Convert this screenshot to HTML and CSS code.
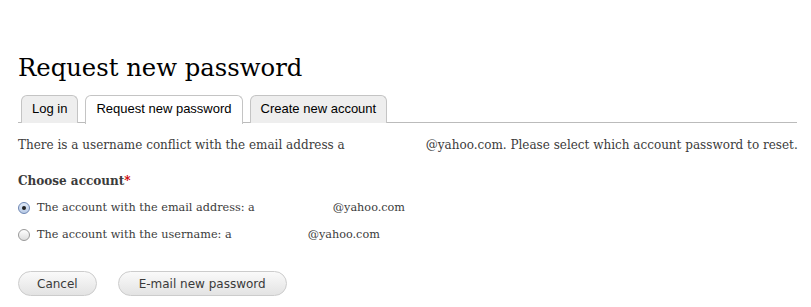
FILE: index.html
```html
<!DOCTYPE html>
<html>
<head>
<meta charset="utf-8">
<link rel="stylesheet" href="styles.css">
</head>
<body>
<div class="page">
  <h1 class="title">Request new password</h1>
  <ul class="tabs">
    <li class="tab">Log in</li>
    <li class="tab active">Request new password</li>
    <li class="tab">Create new account</li>
  </ul>
  <p class="msg">There is a username conflict with the email address a<span class="gap g1"></span>@yahoo.com. Please select which account password to reset.</p>
  <div class="field">
    <div class="label">Choose account<span class="req">*</span></div>
    <div class="opt"><span class="radio checked"></span><span>The account with the email address: a<span class="gap g2"></span>@yahoo.com</span></div>
    <div class="opt"><span class="radio"></span><span>The account with the username: a<span class="gap g3"></span>@yahoo.com</span></div>
  </div>
  <div class="actions">
    <button class="btn">Cancel</button>
    <button class="btn wide">E-mail new password</button>
  </div>
</div>
</body>
</html>
```
FILE: styles.css
```css
html, body { margin: 0; padding: 0; background: #fff; }
.page { padding: 50px 0 0 18px; font-family: "DejaVu Serif", serif; color: #3b3b3b; }
.title { margin: 0; font-family: "DejaVu Serif", serif; font-weight: normal; font-size: 24.3px; line-height: 36px; color: #000; }
.tabs { list-style: none; margin: 8px 14px 0 0; padding: 0 0 0 3px; display: flex; gap: 7px; border-bottom: 1px solid #bbb; height: 28px; }
.tab { font-family: "Liberation Sans", sans-serif; font-size: 13px; color: #000; background: #eee; border: 1px solid #c4c4c4; border-bottom: none; border-radius: 6px 6px 0 0; padding: 0 10px; height: 27px; line-height: 25px; margin-top: 1px; }
.tab.active { background: #fff; height: 28px; margin-bottom: -1px; }
.msg { margin: 13px 0 0 0; font-size: 12px; line-height: 18px; white-space: nowrap; }
.gap { display: inline-block; width: 81px; }
.g2 { width: 78px; }
.g3 { width: 76px; }
.field { margin-top: 18px; }
.label { font-weight: bold; font-size: 12px; line-height: 18px; }
.req { color: #c00; }
.opt { display: flex; align-items: center; gap: 7px; font-size: 11.25px; line-height: 18px; margin-top: 9px; }
.radio { width: 12px; height: 12px; border-radius: 50%; border: 1px solid #999; background: linear-gradient(#fff, #ddd); box-sizing: border-box; position: relative; }
.radio.checked { border-color: #6d86b3; background: linear-gradient(#dfe9f7, #b9cbe6); }
.radio.checked::after { content: ""; position: absolute; left: 3px; top: 3px; width: 4px; height: 4px; border-radius: 50%; background: #222; }
.actions { display: flex; gap: 21px; margin-top: 27px; }
.btn { font-family: "DejaVu Sans", sans-serif; font-size: 12px; color: #3a3a3a; background: linear-gradient(#fafafa, #e3e3e3); border: 1px solid #ccc; border-radius: 13px; height: 25px; padding: 0 18px; }
.btn.wide { padding: 0 20px; }
```
